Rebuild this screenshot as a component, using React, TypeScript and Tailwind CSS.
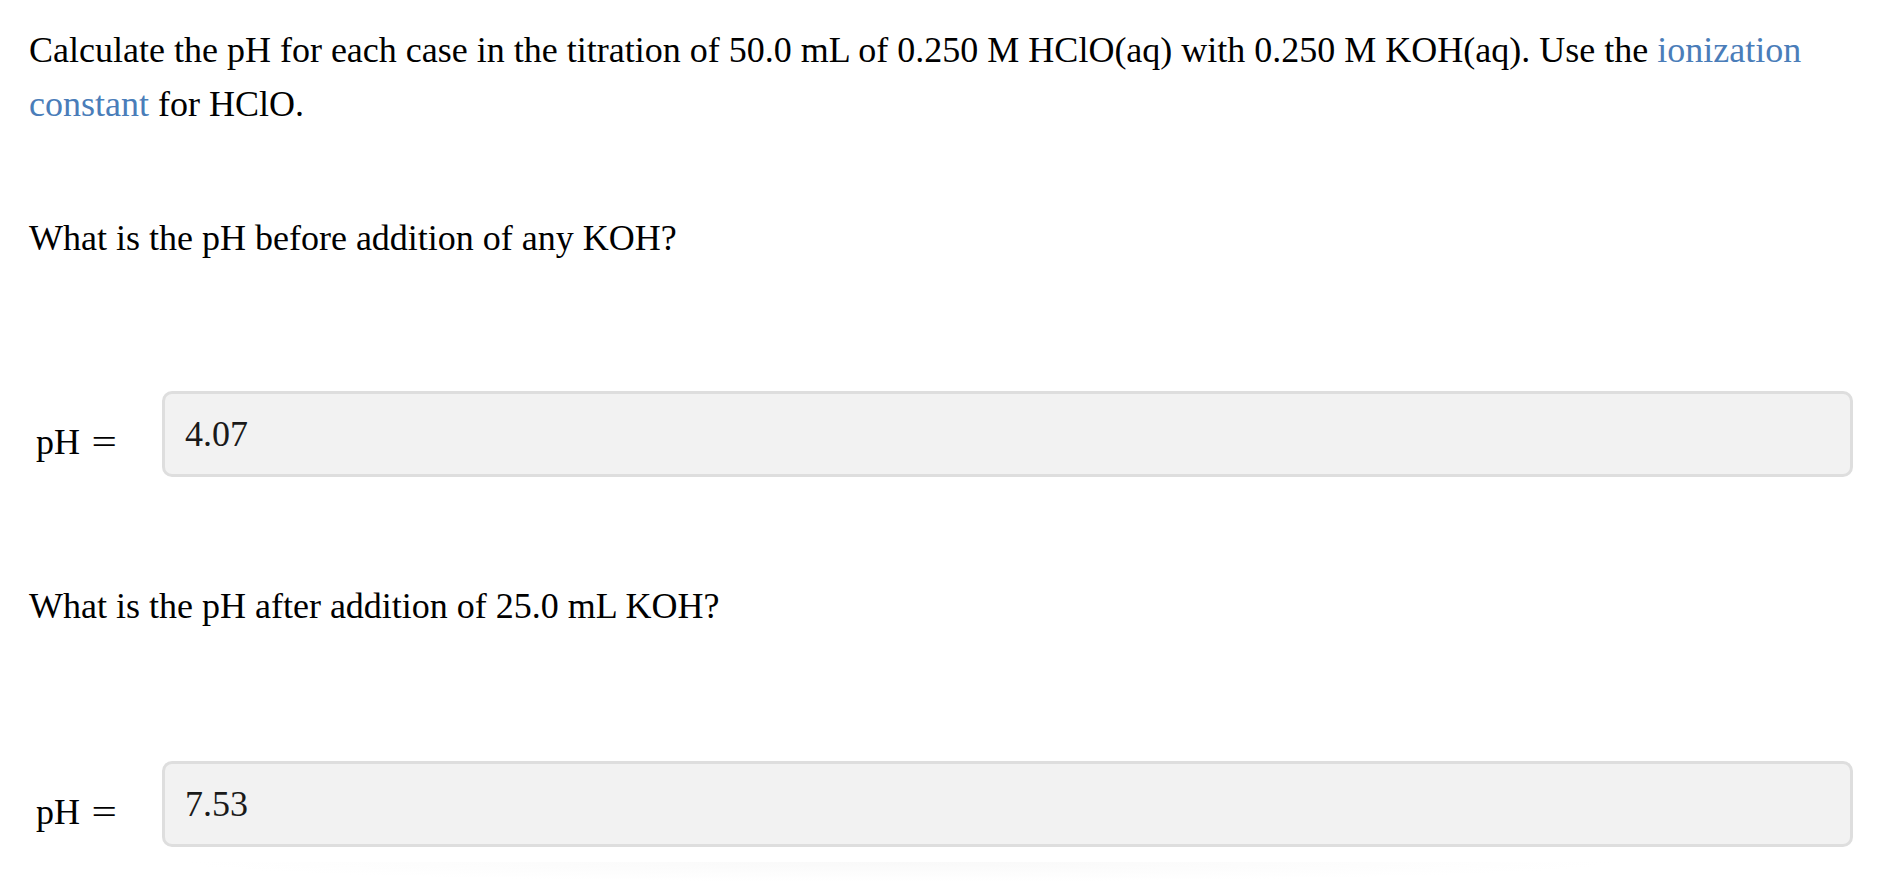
import React from "react";

const serif = "font-['Liberation_Serif','Times_New_Roman',Times,serif]";

function AnswerRow({ value }: { value: string }) {
  return (
    <div className="flex items-start">
      <div className="w-[133px] shrink-0 pl-[7px] pt-[24px] leading-[54px]">
        pH <span className="ml-[5px] inline-block scale-x-[1.25]">=</span>
      </div>
      <div className="box-border h-[86px] flex-1 rounded-[10px] border-[3px] border-[#dedede] bg-[#f2f2f2] pl-[20px] pt-[13px] leading-[54px] text-[#1a1a1a]">
        {value}
      </div>
    </div>
  );
}

export default function App() {
  return (
    <div className={`${serif} min-h-[882px] bg-white text-[36px] text-black`}>
      <div className="pl-[29px] pr-[47px] pt-[23px]">
        <p className="leading-[54px]">
          Calculate the pH for each case in the titration of 50.0 mL of 0.250 M HClO(aq) with 0.250 M KOH(aq). Use the{" "}
          <a className="text-[#4a7db9]">ionization constant</a> for HClO.
        </p>

        <p className="mt-[80px] leading-[54px]">What is the pH before addition of any KOH?</p>
        <div className="mt-[126px]">
          <AnswerRow value="4.07" />
        </div>

        <p className="mt-[102px] leading-[54px]">What is the pH after addition of 25.0 mL KOH?</p>
        <div className="mt-[128px]">
          <AnswerRow value="7.53" />
        </div>

        <div className="ml-[150px] mr-[230px] mt-[15px] h-[20px] bg-[radial-gradient(ellipse_at_top,#f9f9f9,transparent_70%)]" />
      </div>
    </div>
  );
}
